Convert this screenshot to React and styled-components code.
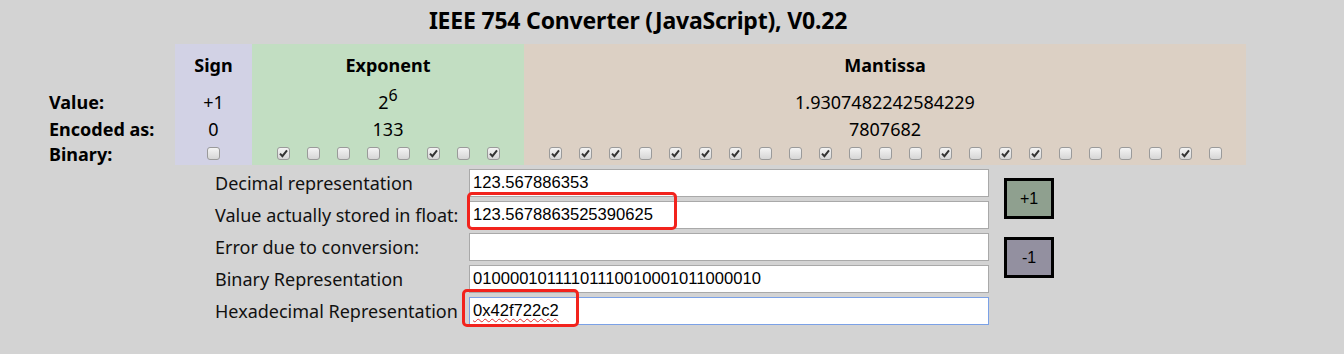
import React from 'react'
import styled, { createGlobalStyle } from 'styled-components'

const GlobalStyle = createGlobalStyle`
  body {
    margin: 0;
    background: #d3d3d3;
    font-family: "Noto Sans", "Open Sans", sans-serif;
    color: #000;
  }
`

const expBits = [1, 0, 0, 0, 0, 1, 0, 1]
const manBits = '11101110010001011000010'.split('').map(Number)

const Check = ({ on }) => (
  <Box>
    {on ? (
      <svg width="9" height="9" viewBox="0 0 9 9">
        <path d="M1 4.6 L3.4 7.2 L8 1.4" fill="none" stroke="#333" strokeWidth="2" />
      </svg>
    ) : null}
  </Box>
)

const App = () => {
  return (
    <Page>
      <GlobalStyle />
      <Title>IEEE 754 Converter (JavaScript), V0.22</Title>
      <Table>
        <Label />
        <Cell $bg="#d2d2e5" $head>Sign</Cell>
        <Cell $bg="#c2dec2" $head>Exponent</Cell>
        <Cell $bg="#dcd0c4" $head>Mantissa</Cell>

        <Label>Value:</Label>
        <Cell $bg="#d2d2e5">+1</Cell>
        <Cell $bg="#c2dec2"><span>2<Sup>6</Sup></span></Cell>
        <Cell $bg="#dcd0c4">1.9307482242584229</Cell>

        <Label>Encoded as:</Label>
        <Cell $bg="#d2d2e5">0</Cell>
        <Cell $bg="#c2dec2">133</Cell>
        <Cell $bg="#dcd0c4">7807682</Cell>

        <Label>Binary:</Label>
        <Bits $bg="#d2d2e5"><Check on={0} /></Bits>
        <Bits $bg="#c2dec2">
          {expBits.map((b, i) => <Check key={i} on={b} />)}
        </Bits>
        <Bits $bg="#dcd0c4">
          {manBits.map((b, i) => <Check key={i} on={b} />)}
        </Bits>
      </Table>

      <Form>
        <Fields>
          <FieldLabel>Decimal representation</FieldLabel>
          <InputWrap><Field defaultValue="123.567886353" /></InputWrap>

          <FieldLabel>Value actually stored in float:</FieldLabel>
          <InputWrap>
            <Field defaultValue="123.5678863525390625" />
            <Mark $left={-2} $top={-7} $w={210} />
          </InputWrap>

          <FieldLabel>Error due to conversion:</FieldLabel>
          <InputWrap><Field defaultValue="" /></InputWrap>

          <FieldLabel>Binary Representation</FieldLabel>
          <InputWrap><Field defaultValue="01000010111101110010001011000010" /></InputWrap>

          <FieldLabel>Hexadecimal Representation</FieldLabel>
          <InputWrap>
            <FakeField $focus>
              <Squiggle>0x42f722c2</Squiggle>
            </FakeField>
            <Mark $left={-7} $top={-6} $w={117} />
          </InputWrap>
        </Fields>
        <Buttons>
          <StepButton $bg="#8fa08f">+1</StepButton>
          <StepButton $bg="#9390a0">-1</StepButton>
        </Buttons>
      </Form>
    </Page>
  )
}

const Page = styled.div`
  width: 1344px;
  height: 354px;
  overflow: hidden;
`

const Title = styled.h1`
  margin: 0;
  padding-top: 4px;
  height: 44px;
  box-sizing: border-box;
  text-align: center;
  font-size: 23px;
  font-weight: 700;
  letter-spacing: -0.2px;
  padding-right: 68px;
`

const Table = styled.div`
  display: grid;
  grid-template-columns: 175px 77px 272px 722px;
  grid-template-rows: 44px 28px 26px 23px;
  width: 1246px;
`

const Label = styled.div`
  padding-left: 49px;
  font-weight: 700;
  font-size: 18px;
  display: flex;
  align-items: center;
`

const Cell = styled.div`
  background: ${(p) => p.$bg};
  display: flex;
  align-items: center;
  justify-content: center;
  font-size: 18px;
  font-weight: ${(p) => (p.$head ? 700 : 400)};
  padding-bottom: ${(p) => (p.$head ? '2px' : '0')};
`

const Sup = styled.sup`
  font-size: 16px;
  line-height: 0;
  position: relative;
  top: -1px;
`

const Bits = styled.div`
  background: ${(p) => p.$bg};
  display: flex;
  align-items: center;
  justify-content: center;
  gap: 17px;
  padding-bottom: 1px;
`

const Box = styled.span`
  width: 13px;
  height: 13px;
  box-sizing: border-box;
  border: 1px solid #9a9a9a;
  border-radius: 3px;
  background: linear-gradient(#f4f4f4, #d6d6d6);
  display: flex;
  align-items: center;
  justify-content: center;
`

const Form = styled.div`
  display: flex;
  padding-left: 215px;
  padding-top: 2px;
`

const Fields = styled.div`
  display: grid;
  grid-template-columns: 254px 520px;
  grid-auto-rows: 32px;
`

const FieldLabel = styled.div`
  font-size: 18px;
  display: flex;
  align-items: center;
  color: #111;
  white-space: nowrap;
`

const InputWrap = styled.div`
  position: relative;
  display: flex;
  align-items: center;
`

const Field = styled.input`
  width: 520px;
  height: 28px;
  box-sizing: border-box;
  border: 1px solid #a9a9a9;
  background: #fff;
  padding: 0 3px;
  font-family: "Liberation Sans", Arial, sans-serif;
  font-size: 16.6px;
  color: #000;
  outline: none;
`

const FakeField = styled.div`
  width: 520px;
  height: 28px;
  box-sizing: border-box;
  border: 1px solid ${(p) => (p.$focus ? '#7ba1e6' : '#a9a9a9')};
  background: #fff;
  padding: 0 3px;
  font-family: "Liberation Sans", Arial, sans-serif;
  font-size: 16.6px;
  display: flex;
  align-items: center;
`

const Squiggle = styled.span`
  text-decoration: underline wavy #e03030;
  text-decoration-thickness: 1px;
  text-underline-offset: 2px;
`

const Mark = styled.div`
  position: absolute;
  left: ${(p) => p.$left}px;
  top: ${(p) => p.$top}px;
  width: ${(p) => p.$w}px;
  height: 38px;
  box-sizing: border-box;
  border: 3px solid #f2231d;
  border-radius: 5px;
  pointer-events: none;
`

const Buttons = styled.div`
  display: flex;
  flex-direction: column;
  gap: 18px;
  margin-left: 15px;
  padding-top: 11px;
`

const StepButton = styled.div`
  width: 50px;
  height: 41px;
  box-sizing: border-box;
  border: 3px solid #000;
  background: ${(p) => p.$bg};
  font-family: "Liberation Sans", Arial, sans-serif;
  font-size: 16px;
  display: flex;
  align-items: center;
  justify-content: center;
`

export default App
